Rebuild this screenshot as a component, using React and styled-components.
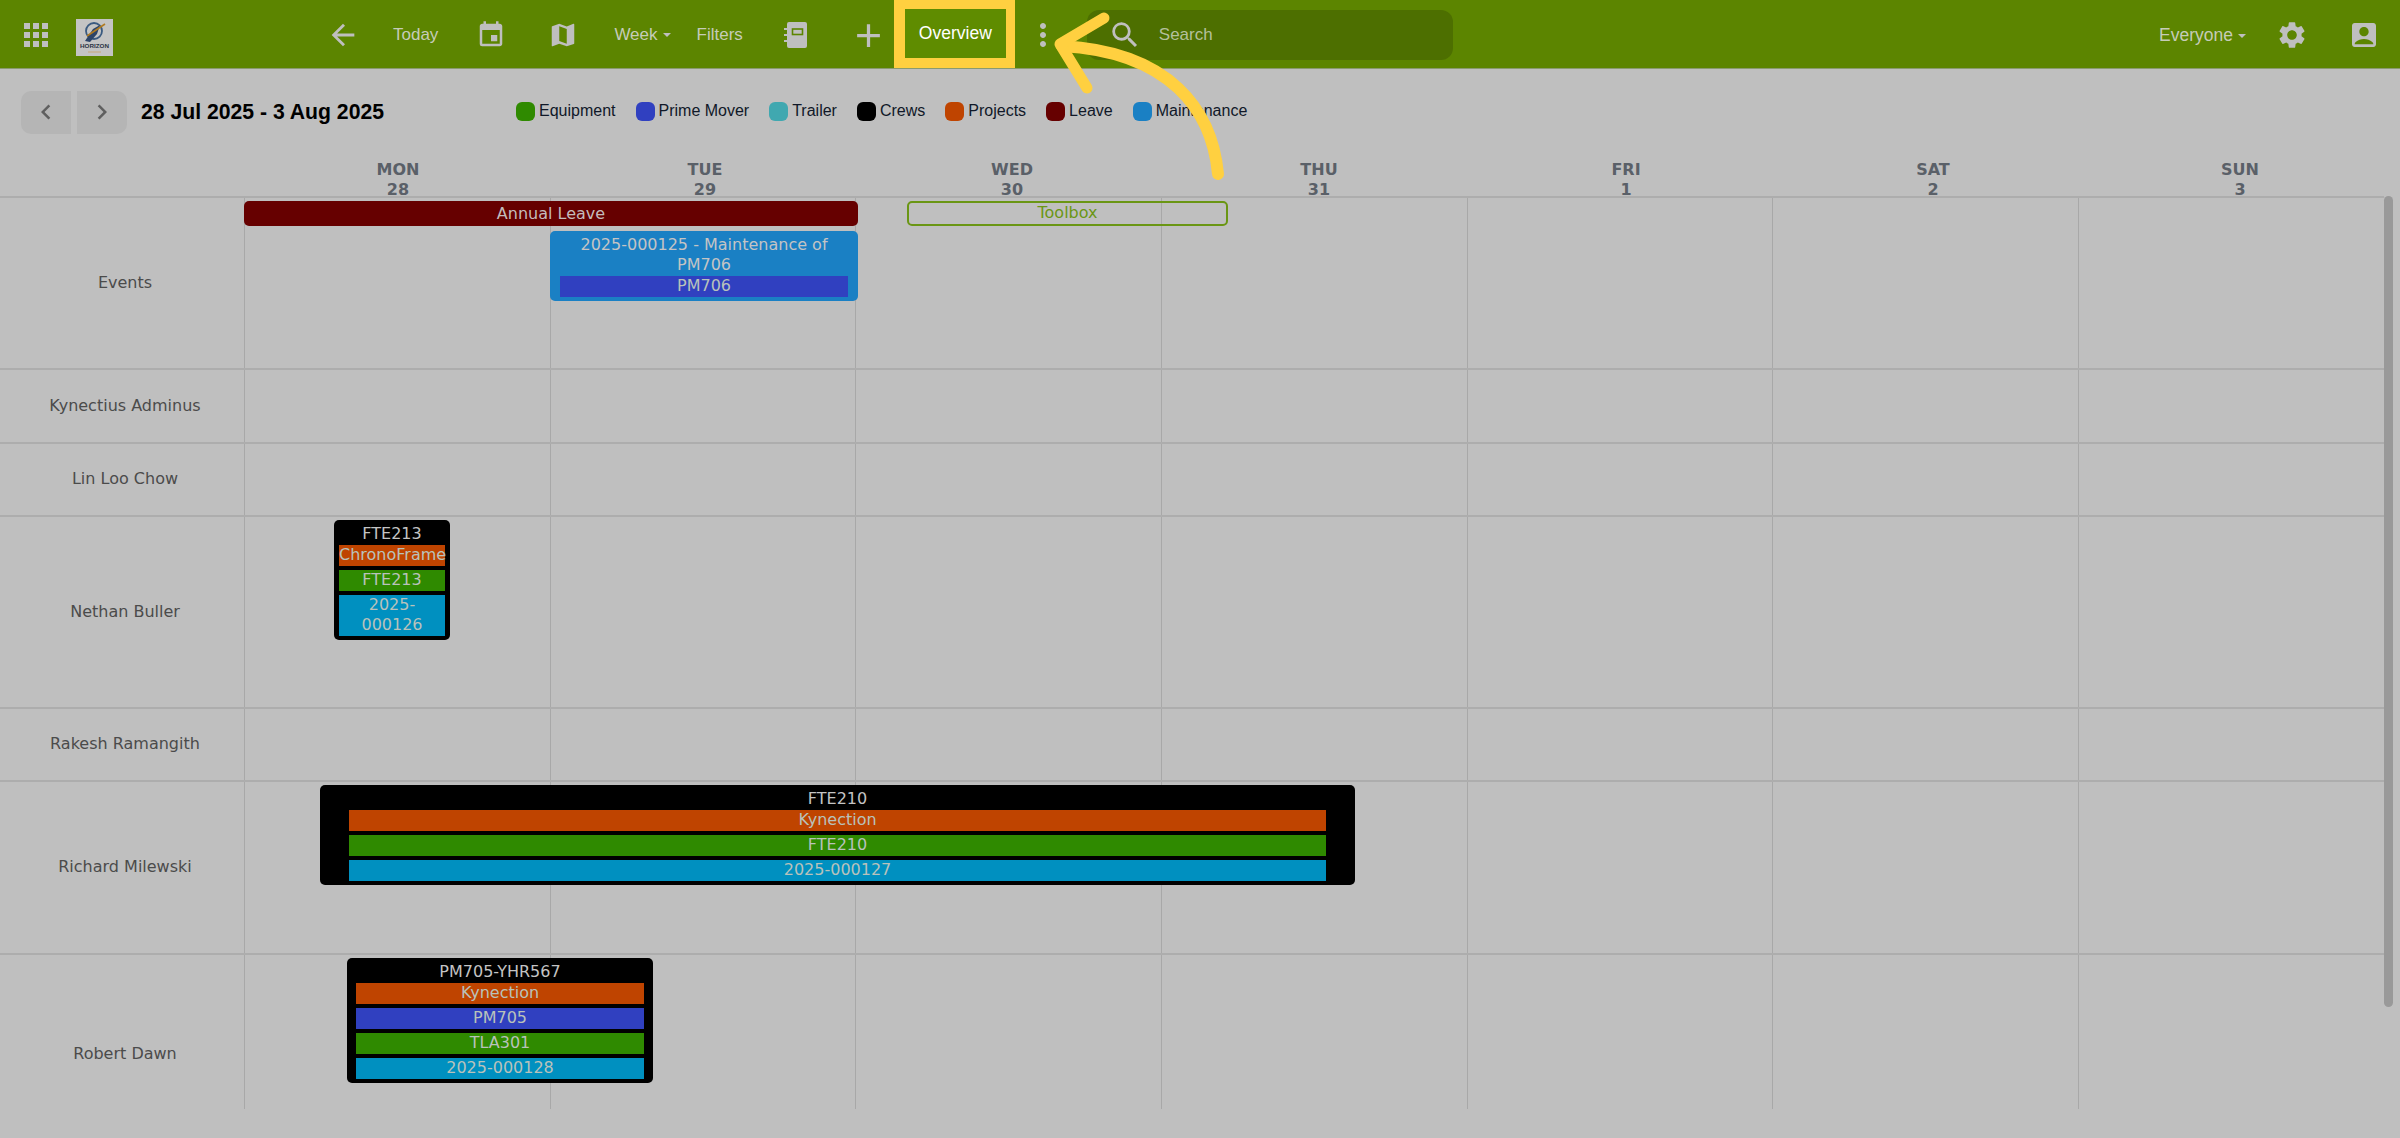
import React from 'react'
import styled, { createGlobalStyle } from 'styled-components'
import {
    MdApps, MdArrowBack, MdEvent, MdMap, MdAdd, MdMoreVert, MdSearch,
    MdSettings, MdAccountBox, MdChevronLeft, MdChevronRight,
} from 'react-icons/md'

const GlobalStyle = createGlobalStyle`
    html, body { margin: 0; padding: 0; background: #bfbfbf; }
    body { font-family: "Liberation Sans", Arial, sans-serif; overflow: hidden; }
    * { box-sizing: border-box; }
`

const Page = styled.div`
    position: relative;
    width: 2400px;
    height: 1138px;
    overflow: hidden;
    background: #bfbfbf;
`

const Header = styled.header`
    display: flex;
    align-items: center;
    height: 69px;
    padding: 2px 20px 0 18px;
    background: #5c8500;
    border-bottom: 1px solid #8a9a70;
    color: #c6ccb8;
    font-size: 17px;
`

const IconSlot = styled.span`
    display: inline-flex;
    align-items: center;
    justify-content: center;
    flex: none;
    margin-left: ${p => p.$ml || 0}px;
    font-size: ${p => p.$size || 30}px;
    width: ${p => p.$size || 30}px;
    color: #bfbfbf;
`

const Logo = styled.svg`
    flex: none;
    width: 37px;
    height: 37px;
    margin-left: 22px;
    margin-top: 4px;
`

const NavText = styled.span`
    flex: none;
    margin-left: ${p => p.$ml || 0}px;
    font-size: ${p => p.$size || 17}px;
`

const Caret = styled.i`
    display: inline-block;
    margin-left: 5px;
    vertical-align: 3px;
    border-left: 4px solid transparent;
    border-right: 4px solid transparent;
    border-top: 4px solid #bfbfbf;
`

const OverviewButton = styled.span`
    flex: none;
    display: flex;
    align-items: center;
    justify-content: center;
    width: 121px;
    height: 68px;
    margin: -2px 0 0 6px;
    background: #5f8c00;
    border: solid #ffd040;
    border-width: 9px 9px 10px 11px;
    color: #fff;
    font-size: 17.5px;
`

const SearchBox = styled.div`
    flex: none;
    display: flex;
    align-items: center;
    width: 366px;
    height: 50px;
    margin-left: 26px;
    padding-left: 21px;
    border-radius: 12px;
    background: #4d6f00;
    color: #b4c09c;
`

const SearchLabel = styled.span`
    margin-left: 17px;
`

const Spacer = styled.div`
    flex: 1;
`

const DateBar = styled.div`
    display: flex;
    align-items: center;
    height: 86px;
    padding-left: 21px;
`

const PageButton = styled.button`
    display: flex;
    align-items: center;
    justify-content: center;
    width: 50px;
    height: 43px;
    margin-right: ${p => p.$first ? 6 : 0}px;
    padding: 0;
    border: 0;
    background: #b5b5b5;
    color: #5f5f5f;
    font-size: 30px;
    border-radius: ${p => p.$first ? '10px 0 0 10px' : '0 10px 10px 0'};
`

const RangeTitle = styled.h2`
    margin: 0 0 0 14px;
    width: 375px;
    font-size: 21.2px;
    font-weight: 700;
    color: #000;
`

const Legend = styled.ul`
    display: flex;
    gap: 20px;
    margin: 0 0 2px;
    padding: 0;
    list-style: none;
    color: #101828;
    font-size: 16px;
`

const LegendItem = styled.li`
    display: flex;
    align-items: center;
    gap: 4px;
`

const Swatch = styled.span`
    width: 19px;
    height: 19px;
    border-radius: 6px;
    background: ${p => p.$color};
`

const DayHeader = styled.div`
    display: grid;
    grid-template-columns: 244.5px repeat(7, 307px);
    height: 41px;
    padding-top: 5px;
    font-family: "DejaVu Sans", sans-serif;
    font-size: 16px;
    font-weight: 700;
    line-height: 20px;
    color: #5a6068;
    text-align: center;
`

const DayName = styled.div`
    grid-column: ${p => p.$col};
`

const Scheduler = styled.div`
    position: relative;
    height: 913px;
    overflow: hidden;
    border-top: 2px solid #adadad;
    width: 2384px;
`

const Row = styled.div`
    display: grid;
    grid-template-columns: 244px 1fr;
    height: ${p => p.$height}px;
    border-bottom: ${p => p.$last ? 0 : '2px solid #adadad'};
`

const RowLabel = styled.div`
    display: flex;
    align-items: center;
    justify-content: center;
    padding: 0 0 2px 6px;
    font-family: "DejaVu Sans", sans-serif;
    font-size: 16px;
    color: #4b4b4b;
`

const Lane = styled.div`
    position: relative;
    display: grid;
    grid-template-columns: repeat(7, 305.7px);
`

const DayCell = styled.div`
    border-left: 1px solid #a8a8a8;
`

const eventFont = `
    font-family: "DejaVu Sans", sans-serif;
    font-size: 16px;
    line-height: 20px;
    text-align: center;
`

const Bar = styled.div`
    ${eventFont}
    position: absolute;
    left: ${p => p.$left}px;
    top: ${p => p.$top}px;
    width: ${p => p.$width}px;
    height: 25px;
    border-radius: 5px;
    background: ${p => p.$outline ? 'transparent' : p.$bg};
    border: ${p => p.$outline ? `2.5px solid ${p.$bg}` : 0};
    line-height: ${p => p.$outline ? 20 : 25}px;
    color: ${p => p.$outline ? p.$bg : '#c4bcbc'};
`

const EventCard = styled.div`
    ${eventFont}
    position: absolute;
    left: ${p => p.$left}px;
    top: ${p => p.$top}px;
    width: ${p => p.$width}px;
    padding: 4px ${p => p.$padX}px;
    border-radius: 5px;
    background: ${p => p.$bg};
    color: #c4c4c4;
`

const CardTitle = styled.div`
    height: 17px;
`

const Chip = styled.div`
    margin-top: ${p => p.$flush ? 1 : 4}px;
    padding-bottom: 1px;
    background: ${p => p.$bg};
    color: #b9c2bb;
    white-space: ${p => p.$nowrap ? 'nowrap' : 'normal'};
`

const Scrollbar = styled.div`
    position: absolute;
    left: 2384px;
    top: 196px;
    width: 9px;
    height: 811px;
    border-radius: 5px;
    background: #999;
`

const Annotation = styled.svg`
    position: absolute;
    left: 0;
    top: 0;
    pointer-events: none;
`

const COLORS = {
    equipment: '#2f8a00',
    primeMover: '#3040c0',
    trailer: '#40a8b0',
    crews: '#000',
    projects: '#bf4400',
    leave: '#660000',
    maintenance: '#1a80c4',
    job: '#0090c0',
}

const LEGEND = [
    ['Equipment', COLORS.equipment],
    ['Prime Mover', COLORS.primeMover],
    ['Trailer', COLORS.trailer],
    ['Crews', COLORS.crews],
    ['Projects', COLORS.projects],
    ['Leave', COLORS.leave],
    ['Maintenance', COLORS.maintenance],
]

const DAYS = [['MON', 28], ['TUE', 29], ['WED', 30], ['THU', 31], ['FRI', 1], ['SAT', 2], ['SUN', 3]]

const ROWS = [
    { name: 'Events', height: 172 },
    { name: 'Kynectius Adminus', height: 74 },
    { name: 'Lin Loo Chow', height: 73 },
    { name: 'Nethan Buller', height: 192 },
    { name: 'Rakesh Ramangith', height: 73 },
    { name: 'Richard Milewski', height: 173 },
    { name: 'Robert Dawn', height: 198, last: true },
]

// event offsets are relative to the lane of their row
const EVENTS = {
    Events: (
        <>
            <Bar $left={0} $top={3} $width={614} $bg={COLORS.leave}>Annual Leave</Bar>
            <Bar $left={663} $top={3} $width={321} $bg="#6a9614" $outline>Toolbox</Bar>
            <EventCard $left={306} $top={33} $width={308} $padX={10} $bg={COLORS.maintenance}>
                2025-000125 - Maintenance of PM706
                <Chip $flush $bg={COLORS.primeMover}>PM706</Chip>
            </EventCard>
        </>
    ),
    'Nethan Buller': (
        <EventCard $left={90} $top={3} $width={116} $padX={5} $bg="#000">
            <CardTitle>FTE213</CardTitle>
            <Chip $nowrap $bg={COLORS.projects}>ChronoFrame</Chip>
            <Chip $bg={COLORS.equipment}>FTE213</Chip>
            <Chip $bg={COLORS.job}>2025-000126</Chip>
        </EventCard>
    ),
    'Richard Milewski': (
        <EventCard $left={76} $top={3} $width={1035} $padX={29} $bg="#000">
            <CardTitle>FTE210</CardTitle>
            <Chip $bg={COLORS.projects}>Kynection</Chip>
            <Chip $bg={COLORS.equipment}>FTE210</Chip>
            <Chip $bg={COLORS.job}>2025-000127</Chip>
        </EventCard>
    ),
    'Robert Dawn': (
        <EventCard $left={103} $top={3} $width={306} $padX={9} $bg="#000">
            <CardTitle>PM705-YHR567</CardTitle>
            <Chip $bg={COLORS.projects}>Kynection</Chip>
            <Chip $bg={COLORS.primeMover}>PM705</Chip>
            <Chip $bg={COLORS.equipment}>TLA301</Chip>
            <Chip $bg={COLORS.job}>2025-000128</Chip>
        </EventCard>
    ),
}

function LogoMark() {
    return (
        <Logo viewBox="0 0 37 37">
            <rect width="37" height="37" fill="#c4c4c4" />
            <circle cx="18" cy="12" r="8" fill="none" stroke="#3a5a80" strokeWidth="1.8" />
            <path d="M9 22 L17 10 L24 6 L21 15 L14 23 Z" fill="#2c4468" />
            <path d="M11 17 L29 5" stroke="#b07a20" strokeWidth="1.6" />
            <text x="18.5" y="29" fontSize="5" fontWeight="700" textAnchor="middle" textLength="29" lengthAdjust="spacingAndGlyphs" fontFamily="Liberation Sans" fill="#2c3444">HORIZON</text>
            <path d="M12 33 H25" stroke="#c8a878" strokeWidth="1" />
        </Logo>
    )
}

function Notebook() {
    return (
        <svg width="23" height="26" viewBox="0 0 23 26">
            <path fill="#bfbfbf" d="M5 0H21a2 2 0 0 1 2 2V24a2 2 0 0 1-2 2H5a2 2 0 0 1-2-2V20H0V18H3V14H0V12H3V8H0V6H3V2A2 2 0 0 1 5 0Z" />
            <rect x="8.5" y="7" width="10" height="5.5" fill="#bfbfbf" stroke="#5c8500" strokeWidth="1.6" />
        </svg>
    )
}

export default function App() {
    return (
        <Page>
            <GlobalStyle />
            <Header>
                <IconSlot $size={36}><MdApps /></IconSlot>
                <LogoMark />
                <IconSlot $ml={213} $size={34}><MdArrowBack /></IconSlot>
                <NavText $ml={33}>Today</NavText>
                <IconSlot $ml={38} $size={30}><MdEvent /></IconSlot>
                <IconSlot $ml={42} $size={30}><MdMap /></IconSlot>
                <NavText $ml={36}>Week<Caret /></NavText>
                <NavText $ml={26}>Filters</NavText>
                <IconSlot $ml={41} $size={23}><Notebook /></IconSlot>
                <IconSlot $ml={42} $size={39}><MdAdd /></IconSlot>
                <OverviewButton>Overview</OverviewButton>
                <IconSlot $ml={10} $size={36}><MdMoreVert /></IconSlot>
                <SearchBox>
                    <IconSlot $size={34}><MdSearch /></IconSlot>
                    <SearchLabel>Search</SearchLabel>
                </SearchBox>
                <Spacer />
                <NavText $size={17.5}>Everyone<Caret /></NavText>
                <IconSlot $ml={30} $size={32}><MdSettings /></IconSlot>
                <IconSlot $ml={40} $size={32}><MdAccountBox /></IconSlot>
            </Header>

            <DateBar>
                <PageButton $first><MdChevronLeft /></PageButton>
                <PageButton><MdChevronRight /></PageButton>
                <RangeTitle>28 Jul 2025 - 3 Aug 2025</RangeTitle>
                <Legend>
                    {LEGEND.map(([label, color]) => (
                        <LegendItem key={label}><Swatch $color={color} />{label}</LegendItem>
                    ))}
                </Legend>
            </DateBar>

            <DayHeader>
                {DAYS.map(([day, date], i) => (
                    <DayName key={day} $col={i + 2}>{day}<br />{date}</DayName>
                ))}
            </DayHeader>

            <Scheduler>
                {ROWS.map(row => (
                    <Row key={row.name} $height={row.height} $last={row.last}>
                        <RowLabel>{row.name}</RowLabel>
                        <Lane>
                            {DAYS.map(([day]) => <DayCell key={day} />)}
                            {EVENTS[row.name]}
                        </Lane>
                    </Row>
                ))}
            </Scheduler>

            <Scrollbar />

            <Annotation width="2400" height="1138" viewBox="0 0 2400 1138" fill="none" stroke="#ffd040" strokeLinecap="round" strokeLinejoin="round">
                <path d="M1218 174 C1212 110 1170 52 1062 46" strokeWidth="12" />
                <path d="M1104 18 L1060 44 L1087 88" strokeWidth="11" />
            </Annotation>
        </Page>
    )
}
